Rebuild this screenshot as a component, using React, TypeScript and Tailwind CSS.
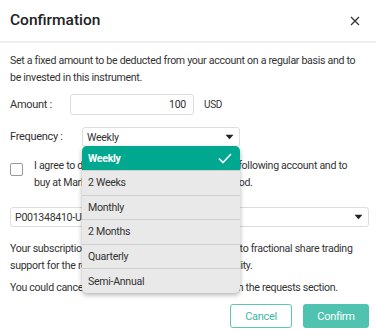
import React from "react";

const options = ["Weekly", "2 Weeks", "Monthly", "2 Months", "Quarterly", "Semi-Annual"];

function Caret() {
  return (
    <svg width="9" height="6" viewBox="0 0 9 6" className="text-[#222]">
      <path d="M0.5 0.8h8L4.5 5.2z" fill="currentColor" />
    </svg>
  );
}

export default function App() {
  return (
    <div className="w-[376px] h-[331px] bg-white overflow-hidden font-['Roboto',sans-serif] text-[#333]">
      <div className="h-[43px] flex items-center justify-between pl-[10px] pr-[16px] border-b-2 border-[#eeeeee]">
        <h2 className="text-[15.5px] font-medium text-[#222]">Confirmation</h2>
        <svg width="10" height="10" viewBox="0 0 10 10" className="text-[#333]">
          <path d="M1 1L9 9M9 1L1 9" stroke="currentColor" strokeWidth="1.3" />
        </svg>
      </div>

      <div className="pl-[10px] pr-[7px] pt-[9px] text-[10.6px] leading-[17px] tracking-[-0.3px]">
        <p className="pr-[3px]">Set a fixed amount to be deducted from your account on a regular basis and to be invested in this instrument.</p>

        <div className="flex items-center mt-[8px] h-[21px]">
          <span className="w-[60px] text-[11px]">Amount :</span>
          <div className="w-[124px] h-[21px] border border-[#ddd] rounded-[3px] flex items-center justify-end pr-[7px]">100</div>
          <span className="ml-[10px] text-[10px]">USD</span>
        </div>

        <div className="relative flex mt-[12px]">
          <span className="w-[72px] text-[11px] pt-[1px]">Frequency :</span>
          <div className="w-[158px] h-[20px] border border-[#ddd] rounded-[3px] flex items-center justify-between pl-[4px] pr-[5px]">
            <span>Weekly</span>
            <Caret />
          </div>
          <div className="absolute left-[72px] top-[19px] w-[158px] z-10 rounded-[5px] overflow-hidden bg-[#e9e9e9] shadow-[0_2px_5px_rgba(0,0,0,0.3)]">
            {options.map((o, i) => (
              <div
                key={o}
                className={
                  i === 0
                    ? "h-[24px] bg-[#00a88f] text-white font-bold flex items-center justify-between pl-[6px] pr-[8px]"
                    : "h-[24.6px] border-t border-[#cfcfcf] flex items-center pl-[6px] text-[#333]"
                }
              >
                <span>{o}</span>
                {i === 0 && (
                  <svg width="14" height="11" viewBox="0 0 14 11">
                    <path d="M1 5.5L5 9.5L13 1" stroke="white" strokeWidth="1.6" fill="none" />
                  </svg>
                )}
              </div>
            ))}
          </div>
        </div>

        <div className="flex mt-[10px]">
          <div className="w-[13px] h-[13px] mt-[6px] border border-[#999] rounded-[2px] shrink-0" />
          <p className="ml-[11px] whitespace-nowrap">
            I agree to deduct the chosen amount from the following account and to
            <br />
            buy at Market price on the closing of every period.
          </p>
        </div>

        <div className="mt-[16px] h-[20px] border border-[#ddd] rounded-[3px] flex items-center justify-between pl-[4px] pr-[5px]">
          <span>P001348410-USD</span>
          <Caret />
        </div>

        <p className="mt-[13px] whitespace-nowrap">
          Your subscription request is also tied and subjected to fractional share trading
          <br />
          support for the relevant instruments with its availability.
        </p>
        <p className="mt-[5px]">You could cancel this subscription plan at any time in the requests section.</p>

        <div className="flex justify-end gap-[11px] mt-[8px]">
          <button className="w-[62px] h-[24px] border border-[#5cc6b5] rounded-[3px] text-[#3db8a4] text-[11px]">Cancel</button>
          <button className="w-[66px] h-[24px] rounded-[3px] bg-[#4fc2b0] text-white text-[11px]">Confirm</button>
        </div>
      </div>
    </div>
  );
}
